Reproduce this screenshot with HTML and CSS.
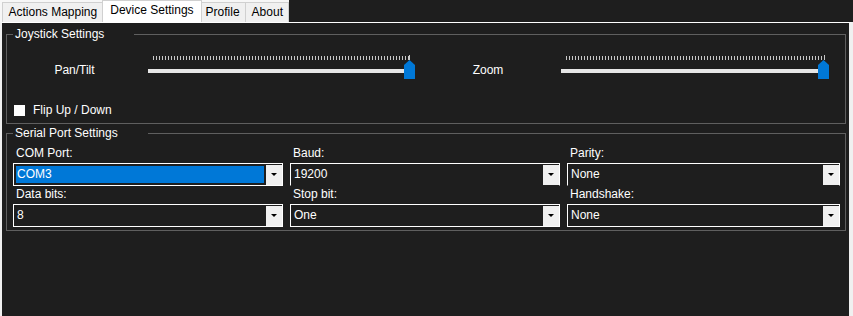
FILE: index.html
```html
<!DOCTYPE html>
<html>
<head>
  <title>Device Settings</title>
  <link rel="stylesheet" href="styles.css">
</head>
<body>
  <div class="tabbar">
    <div class="tabs">
      <div class="tab">Actions Mapping</div>
      <div class="tab active">Device Settings</div>
      <div class="tab">Profile</div>
      <div class="tab">About</div>
    </div>
  </div>

  <div class="panel">
    <fieldset class="group joystick">
      <legend>Joystick Settings</legend>
      <div class="slider-row">
        <span class="slider-label pan">Pan/Tilt</span>
        <div class="slider">
          <div class="ticks"></div>
          <div class="track"></div>
          <svg class="thumb" width="11" height="19" viewBox="0 0 11 19"><polygon points="0,5 5.5,0 11,5 11,19 0,19" fill="#0078d7"/></svg>
        </div>
        <span class="slider-label">Zoom</span>
        <div class="slider wide">
          <div class="ticks"></div>
          <div class="track"></div>
          <svg class="thumb" width="11" height="19" viewBox="0 0 11 19"><polygon points="0,5 5.5,0 11,5 11,19 0,19" fill="#0078d7"/></svg>
        </div>
      </div>
      <label class="check"><span class="box"></span>Flip Up / Down</label>
    </fieldset>

    <fieldset class="group serial">
      <legend>Serial Port Settings</legend>
      <div class="port-grid">
        <div class="field">
          <div class="field-label">COM Port:</div>
          <div class="combo focused"><span class="value">COM3</span><span class="drop"></span></div>
        </div>
        <div class="field">
          <div class="field-label">Baud:</div>
          <div class="combo top"><span class="value">19200</span><span class="drop"></span></div>
        </div>
        <div class="field">
          <div class="field-label">Parity:</div>
          <div class="combo top"><span class="value">None</span><span class="drop"></span></div>
        </div>
        <div class="field">
          <div class="field-label">Data bits:</div>
          <div class="combo"><span class="value">8</span><span class="drop"></span></div>
        </div>
        <div class="field">
          <div class="field-label">Stop bit:</div>
          <div class="combo"><span class="value">One</span><span class="drop"></span></div>
        </div>
        <div class="field">
          <div class="field-label">Handshake:</div>
          <div class="combo"><span class="value">None</span><span class="drop"></span></div>
        </div>
      </div>
    </fieldset>
  </div>
</body>
</html>
```

FILE: styles.css
```css
/* Base */
body {
  margin: 0;
  background: #1e1e1e;
  font-family: "Liberation Sans", Arial, sans-serif;
  font-size: 12px;
  color: #fff;
}

/* Tab strip */
.tabbar {
  display: flex;
  height: 22px;
}

.tabs {
  display: flex;
  align-items: flex-start;
  padding-left: 2px;
  background: #f7f7f7;
}

.tab {
  margin-top: 2px;
  padding: 0 5.5px;
  line-height: 19px;
  border: 1px solid #d0d0d0;
  border-bottom: none;
  background: #f0f0f0;
  color: #000;
  white-space: nowrap;
}

.tab + .tab {
  margin-left: -1px;
}

.tab.active {
  position: relative;
  z-index: 1;
  margin: 0 -2px;
  padding: 0 7.5px 2px;
  background: #fff;
}

/* Tab page */
.panel {
  box-sizing: border-box;
  min-height: calc(100vh - 22px);
  border-top: 1px solid #fff;
  border-left: 2px solid #f0f0f0;
  border-right: 4px solid #f0f0f0;
  background: #1e1e1e;
  overflow: hidden;
}

/* Group boxes */
.group {
  margin: 4px 3px 0 4px;
  padding: 0;
  min-width: 0;
  border: 1px solid #5f5f5f;
}

.group legend {
  margin-left: 6px;
  padding: 0 30px 0 2px;
  line-height: 14px;
}

.joystick {
  padding-bottom: 7px;
}

.serial {
  margin-top: 2px;
  padding: 6px 0 2px;
}

/* Sliders */
.slider-row {
  display: grid;
  grid-template-columns: 141px 267px 146px 268px;
  height: 25px;
  margin-top: 14px;
}

.slider-label {
  padding-top: 8px;
  line-height: 14px;
  text-align: center;
}

.slider-label.pan {
  padding-right: 6px;
}

.slider {
  position: relative;
}

.ticks {
  position: relative;
  width: 257px;
  height: 4px;
  margin: 1px 0 0 5px;
  background: repeating-linear-gradient(to right, #c8c8c8 0 1px, transparent 1px 3px);
}

.ticks::after {
  content: "";
  position: absolute;
  right: 0;
  top: -1px;
  width: 1px;
  height: 5px;
  background: #c8c8c8;
}

.slider.wide .ticks {
  width: 259px;
}

.track {
  height: 4px;
  margin-top: 9px;
  background: #e6e6e6;
}

.thumb {
  position: absolute;
  left: 256px;
  top: 5px;
}

.slider.wide .thumb {
  left: 257px;
}

/* Checkbox */
.check {
  display: flex;
  align-items: center;
  gap: 8px;
  height: 12px;
  margin: 24px 0 0 7px;
  line-height: 12px;
}

.box {
  width: 11px;
  height: 11px;
  background: #fff;
}

/* Serial port fields */
.port-grid {
  display: grid;
  grid-template-columns: 270px 270px 273px;
  column-gap: 7px;
  padding-left: 6px;
}

.field-label {
  height: 17px;
  padding-left: 3px;
  line-height: 14px;
}

.combo {
  box-sizing: border-box;
  display: flex;
  height: 23px;
  margin-bottom: 1px;
  padding: 2px 0 2px 2px;
  border: 1px solid #fff;
}

.combo.top {
  border-bottom-color: #1e1e1e;
}

.value {
  flex: 1;
  padding-left: 1px;
  line-height: 17px;
}

.combo.focused .value {
  background: #0078d7;
}

.drop {
  position: relative;
  width: 16px;
  margin: -1px 0 -2px 2px;
  background: #f0f0f0;
}

.drop::after {
  content: "";
  position: absolute;
  left: 5px;
  top: 8px;
  border-top: 3px solid #000;
  border-left: 3px solid transparent;
  border-right: 3px solid transparent;
}
```
